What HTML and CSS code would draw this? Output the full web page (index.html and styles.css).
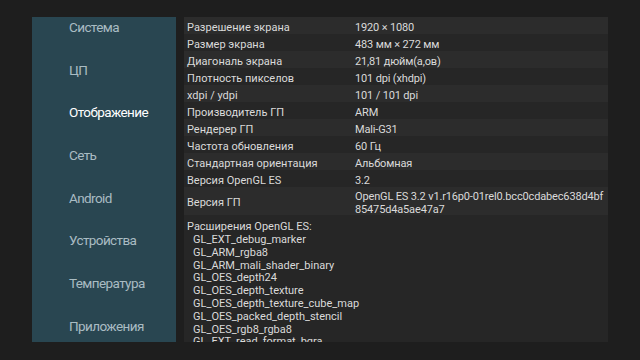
FILE: index.html
```html
<!DOCTYPE html>
<html lang="ru">
<head>
  <meta charset="UTF-8" />
  <title>Отображение</title>
  <link rel="stylesheet" href="styles.css">
</head>
<body>

  <div class="screen">
    <nav class="menu">
      <ul>
        <li>Система</li>
        <li>ЦП</li>
        <li class="active">Отображение</li>
        <li>Сеть</li>
        <li>Android</li>
        <li>Устройства</li>
        <li>Температура</li>
        <li>Приложения</li>
      </ul>
    </nav>

    <main class="info">
      <div class="row"><span class="key">Разрешение экрана</span><span class="val">1920 × 1080</span></div>
      <div class="row"><span class="key">Размер экрана</span><span class="val">483 мм × 272 мм</span></div>
      <div class="row"><span class="key">Диагональ экрана</span><span class="val">21,81 дюйм(а,ов)</span></div>
      <div class="row"><span class="key">Плотность пикселов</span><span class="val">101 dpi (xhdpi)</span></div>
      <div class="row"><span class="key">xdpi / ydpi</span><span class="val">101 / 101 dpi</span></div>
      <div class="row"><span class="key">Производитель ГП</span><span class="val">ARM</span></div>
      <div class="row"><span class="key">Рендерер ГП</span><span class="val">Mali-G31</span></div>
      <div class="row"><span class="key">Частота обновления</span><span class="val">60 Гц</span></div>
      <div class="row"><span class="key">Стандартная ориентация</span><span class="val">Альбомная</span></div>
      <div class="row"><span class="key">Версия OpenGL ES</span><span class="val">3.2</span></div>
      <div class="row tall"><span class="key">Версия ГП</span><span class="val">OpenGL ES 3.2 v1.r16p0-01rel0.bcc0cdabec638d4bf<br>85475d4a5ae47a7</span></div>
      <div class="ext">
        <div class="ext-title">Расширения OpenGL ES:</div>
        <ul>
          <li>GL_EXT_debug_marker</li>
          <li>GL_ARM_rgba8</li>
          <li>GL_ARM_mali_shader_binary</li>
          <li>GL_OES_depth24</li>
          <li>GL_OES_depth_texture</li>
          <li>GL_OES_depth_texture_cube_map</li>
          <li>GL_OES_packed_depth_stencil</li>
          <li>GL_OES_rgb8_rgba8</li>
          <li>GL_EXT_read_format_bgra</li>
        </ul>
      </div>
    </main>
  </div>

</body>
</html>
```

FILE: styles.css
```css
* {
  margin: 0;
  padding: 0;
  box-sizing: border-box;
  font-family: Roboto, "Noto Sans", sans-serif;
}

body {
  width: 640px;
  height: 360px;
  background: #1e1e1e;
  overflow: hidden;
}

.screen {
  display: flex;
  gap: 8px;
  padding: 17px 0 0 32px;
}

.menu {
  width: 144px;
  height: 325px;
  background: #294651;
  overflow: hidden;
}

.menu ul {
  list-style: none;
  margin-top: -11px;
}

.menu li {
  height: 42.7px;
  line-height: 42.7px;
  padding-left: 37px;
  font-size: 13.5px;
  letter-spacing: -0.6px;
  color: #a9bcc3;
}

.menu li.active {
  color: #ffffff;
}

.info {
  width: 424px;
  height: 325px;
  overflow: hidden;
  font-size: 11px;
  color: #dadada;
}

.row {
  display: flex;
  align-items: center;
  height: 17px;
  padding-top: 3px;
  background: #2c2c2c;
}

.row:nth-child(even) {
  background: #262626;
}

.key {
  width: 171px;
  padding-left: 3px;
  flex-shrink: 0;
}

.val {
  letter-spacing: -0.15px;
  white-space: nowrap;
}

.row.tall {
  height: 28px;
  line-height: 13px;
  padding-top: 3px;
}

.ext {
  background: #262626;
  padding: 5px 3px 0;
  height: 200px;
}

.ext-title {
  line-height: 14px;
}

.ext ul {
  list-style: none;
  padding-left: 6px;
}

.ext li {
  line-height: 12.8px;
}
```
